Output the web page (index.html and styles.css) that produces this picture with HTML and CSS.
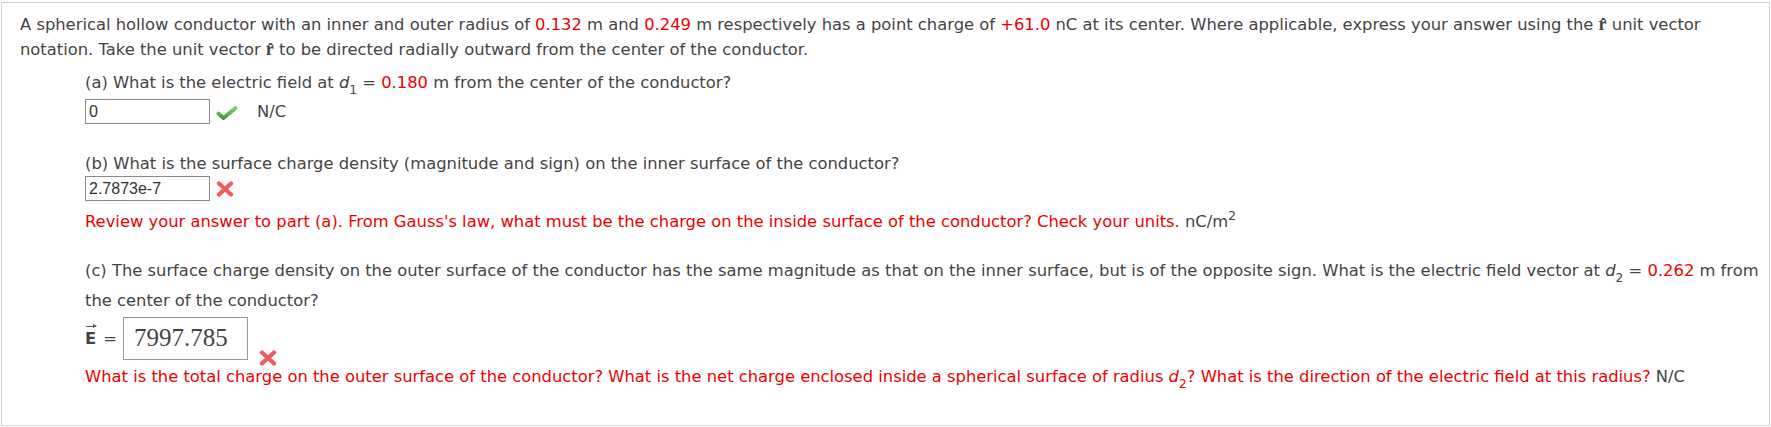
FILE: index.html
```html
<!DOCTYPE html>
<html>
<head>
<meta charset="utf-8">
<link rel="stylesheet" href="styles.css">
</head>
<body>
<div class="question">
  <p class="intro">A spherical hollow conductor with an inner and outer radius of <span class="val">0.132</span> m and <span class="val">0.249</span> m respectively has a point charge of <span class="val">+61.0</span> nC at its center. Where applicable, express your answer using the <b class="rhat">r̂</b> unit vector<br>notation. Take the unit vector <b class="rhat">r̂</b> to be directed radially outward from the center of the conductor.</p>

  <div class="part part-a">
    <p class="prompt">(a) What is the electric field at <i class="var">d</i><sub>1</sub> = <span class="val">0.180</span> m from the center of the conductor?</p>
    <div class="answer">
      <span class="field">0</span>
      <svg class="icon check" width="22" height="14" viewBox="0 0 22 14"><defs><linearGradient id="g" x1="0" y1="0" x2="0" y2="1"><stop offset="0" stop-color="#7fcf6f"/><stop offset="1" stop-color="#3f9e3f"/></linearGradient></defs><path d="M2.5 7.5 L7.5 12 L19.5 2" fill="none" stroke="url(#g)" stroke-width="4" stroke-linecap="round" stroke-linejoin="round"/></svg>
      <span class="unit">N/C</span>
    </div>
  </div>

  <div class="part part-b">
    <p class="prompt">(b) What is the surface charge density (magnitude and sign) on the inner surface of the conductor?</p>
    <div class="answer">
      <span class="field">2.7873e-7</span>
      <svg class="icon cross" width="18" height="16" viewBox="0 0 18 16"><path d="M3 2.5 L15 13.5 M15 2.5 L3 13.5" stroke="#ee5a5e" stroke-width="4.2" stroke-linecap="round"/></svg>
    </div>
    <p class="feedback">Review your answer to part (a). From Gauss's law, what must be the charge on the inside surface of the conductor? Check your units. <span class="plain">nC/m<sup>2</sup></span></p>
  </div>

  <div class="part part-c">
    <p class="prompt tall">(c) The surface charge density on the outer surface of the conductor has the same magnitude as that on the inner surface, but is of the opposite sign. What is the electric field vector at <i class="var">d</i><sub>2</sub> = <span class="val">0.262</span> m from<br>the center of the conductor?</p>
    <div class="answer vec-row">
      <span class="vec-e">E</span>
      <span class="eq">=</span>
      <span class="field big">7997.785</span>
      <svg class="icon cross low" width="18" height="16" viewBox="0 0 18 16"><path d="M3 2.5 L15 13.5 M15 2.5 L3 13.5" stroke="#ee5a5e" stroke-width="4.2" stroke-linecap="round"/></svg>
    </div>
    <p class="feedback">What is the total charge on the outer surface of the conductor? What is the net charge enclosed inside a spherical surface of radius <i class="var">d</i><sub>2</sub>? What is the direction of the electric field at this radius? <span class="plain">N/C</span></p>
  </div>
</div>
</body>
</html>
```

FILE: styles.css
```css
body {
  margin: 0;
  font-family: "DejaVu Sans", Verdana, sans-serif;
  font-size: 16.35px;
  color: #444;
  background: #fff;
}

.question {
  margin: 2px 1px 0 1px;
  height: 424px;
  box-sizing: border-box;
  border: 1px solid #d3d3d3;
  padding: 9px 0 0 18px;
}

p {
  margin: 0;
}

.intro {
  line-height: 25px;
  white-space: nowrap;
}

.val {
  color: #e00;
}

.rhat {
  font-family: "Liberation Serif", serif;
  font-size: 18px;
  font-weight: bold;
}

.var {
  font-style: italic;
}

sub, sup {
  font-size: 75%;
  line-height: 0;
}

sub {
  vertical-align: -6px;
}

sup {
  vertical-align: 7px;
}

.part {
  padding-left: 65px;
}

.part-a {
  margin-top: 9px;
}

.part-b {
  margin-top: 28px;
}

.part-c {
  margin-top: 22px;
}

.prompt {
  line-height: 24px;
  white-space: nowrap;
}

.prompt.tall {
  line-height: 30px;
}

.answer {
  display: flex;
  align-items: center;
  margin-top: 0;
}

.part-a .answer {
  margin-top: 4px;
}

.field {
  display: block;
  box-sizing: border-box;
  width: 125px;
  height: 25px;
  border: 1px solid #8a8a8a;
  padding: 2px 3px;
  font-family: "Liberation Sans", Arial, sans-serif;
  font-size: 16px;
  line-height: 19px;
  color: #333;
}

.icon {
  display: block;
}

.check {
  margin: 2px 0 0 6px;
}

.cross {
  margin: 1px 0 0 6px;
}

.unit {
  margin-left: 19px;
}

.feedback {
  color: #e00;
  line-height: 24px;
  margin-top: 9px;
  white-space: nowrap;
}

.feedback .plain {
  color: #444;
}

.vec-row {
  align-items: flex-end;
}

.part-c .vec-row {
  margin-top: 1px;
}

.vec-e {
  position: relative;
  font-weight: bold;
  align-self: center;
}

.vec-e::before {
  content: "";
  position: absolute;
  left: 1px;
  top: -3px;
  width: 10px;
  border-top: 1.5px solid #555;
}

.vec-e::after {
  content: "";
  position: absolute;
  left: 8px;
  top: -5px;
  border-left: 4px solid #555;
  border-top: 2.5px solid transparent;
  border-bottom: 2.5px solid transparent;
}

.eq {
  align-self: center;
  margin: 0 6px 0 7px;
}

.field.big {
  height: 43px;
  width: 125px;
  font-family: "Liberation Serif", "Times New Roman", serif;
  font-size: 25px;
  line-height: 33px;
  padding: 3px 10px;
  color: #444;
  border-color: #999;
}

.cross.low {
  margin: 0 0 -6px 11px;
}

.part-c .feedback {
  margin-top: 5px;
}
```
